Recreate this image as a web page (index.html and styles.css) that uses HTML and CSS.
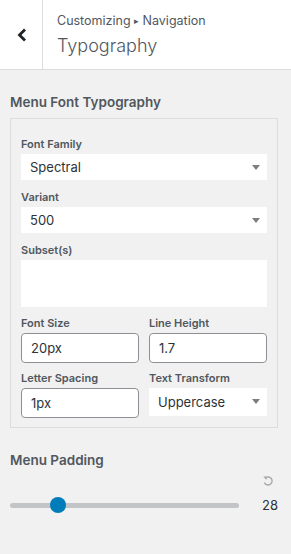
FILE: index.html
```html
<!DOCTYPE html>
<html lang="en">
<head>
    <meta charset="UTF-8">
    <meta name="viewport" content="width=device-width, initial-scale=1.0">
    <title>Typography</title>
    <link rel="stylesheet" href="styles.css">
</head>
<body>
    <header class="panel-head">
        <button class="back" aria-label="Back">
            <svg width="10" height="14" viewBox="0 0 10 14"><path d="M8 1.5 L2.5 7 L8 12.5" fill="none" stroke="#1d2327" stroke-width="2.8"/></svg>
        </button>
        <div class="titles">
            <div class="crumb">Customizing <span class="sep">&#9656;</span> Navigation</div>
            <div class="title">Typography</div>
        </div>
    </header>

    <section class="control">
        <h3 class="control-title">Menu Font Typography</h3>
        <div class="typo-box">
            <label class="lbl">Font Family</label>
            <div class="select">Spectral<span class="caret"></span></div>

            <label class="lbl">Variant</label>
            <div class="select">500<span class="caret"></span></div>

            <label class="lbl">Subset(s)</label>
            <div class="multi"></div>

            <div class="pair">
                <div>
                    <label class="lbl">Font Size</label>
                    <div class="input">20px</div>
                </div>
                <div>
                    <label class="lbl">Line Height</label>
                    <div class="input">1.7</div>
                </div>
            </div>
            <div class="pair">
                <div>
                    <label class="lbl">Letter Spacing</label>
                    <div class="input">1px</div>
                </div>
                <div>
                    <label class="lbl">Text Transform</label>
                    <div class="select small">Uppercase<span class="caret"></span></div>
                </div>
            </div>
        </div>
    </section>

    <section class="control">
        <h3 class="control-title">Menu Padding</h3>
        <div class="reset-row">
            <svg width="12" height="12" viewBox="0 0 12 12"><path d="M3.2 3.2 A4 4 0 1 1 2.4 7.5" fill="none" stroke="#a7aaad" stroke-width="1.4"/><path d="M1.2 1.6 L4.6 1.6 L4.6 5 Z" fill="#a7aaad"/></svg>
        </div>
        <div class="slider-row">
            <div class="track"><span class="thumb" style="left: 21%"></span></div>
            <span class="value">28</span>
        </div>
    </section>
</body>
</html>
```

FILE: styles.css
```css
body {
    margin: 0;
    background: #f1f1f1;
    font-family: Inter, "Liberation Sans", sans-serif;
    color: #50575e;
}

.panel-head {
    display: flex;
    height: 70px;
    background: #fff;
    border-bottom: 1px solid #dcdcde;
    box-sizing: border-box;
}

.back {
    width: 43px;
    border: 0;
    border-right: 1px solid #dcdcde;
    background: #fff;
    padding: 0 0 0 2px;
    display: flex;
    align-items: center;
    justify-content: center;
}

.titles {
    padding: 13px 0 0 14px;
}

.crumb {
    font-size: 12.5px;
    color: #50575e;
    line-height: 16px;
}

.crumb .sep {
    font-size: 9px;
    position: relative;
    top: -1px;
}

.title {
    font-size: 18px;
    font-weight: 300;
    color: #50575e;
    margin-top: 4px;
    line-height: 24px;
}

.control {
    padding: 0 13px 0 10px;
}

.control-title {
    margin: 0;
    padding-top: 23px;
    font-size: 13.5px;
    font-weight: 600;
    line-height: 18px;
    color: #50575e;
}

.typo-box {
    margin-top: 7px;
    border: 1px solid #dcdcde;
    padding: 18px 10px 9px;
}

.lbl {
    display: block;
    font-size: 11px;
    font-weight: 600;
    line-height: 14px;
    color: #50575e;
    margin-bottom: 3px;
}

.select {
    position: relative;
    height: 26px;
    background: #fff;
    font-size: 13px;
    line-height: 26px;
    padding-left: 9px;
    color: #2c3338;
    margin-bottom: 10px;
}

.select.small {
    height: 28px;
    line-height: 28px;
    margin-bottom: 0;
}

.caret {
    position: absolute;
    right: 7px;
    top: 11px;
    border-left: 4px solid transparent;
    border-right: 4px solid transparent;
    border-top: 5px solid #7d7d7d;
}

.multi {
    height: 47px;
    background: #fff;
    margin-bottom: 9px;
}

.pair {
    display: grid;
    grid-template-columns: 1fr 1fr;
    gap: 10px;
    margin-bottom: 8px;
}

.pair:last-child {
    margin-bottom: 0;
}

.input {
    height: 30px;
    box-sizing: border-box;
    background: #fff;
    border: 1px solid #8c8f94;
    border-radius: 4px;
    font-size: 13px;
    line-height: 28px;
    padding-left: 9px;
    color: #2c3338;
}

.reset-row {
    display: flex;
    justify-content: flex-end;
    padding: 6px 4px 0 0;
    height: 14px;
}

.slider-row {
    display: flex;
    align-items: center;
    height: 16px;
    margin-top: 8px;
}

.track {
    position: relative;
    width: 229px;
    height: 5px;
    border-radius: 3px;
    background: #c3c4c7;
}

.thumb {
    position: absolute;
    top: 50%;
    width: 16px;
    height: 16px;
    margin: -8px 0 0 -8px;
    border-radius: 50%;
    background: #007cba;
}

.value {
    margin-left: auto;
    font-size: 13px;
    color: #2c3338;
}
```
